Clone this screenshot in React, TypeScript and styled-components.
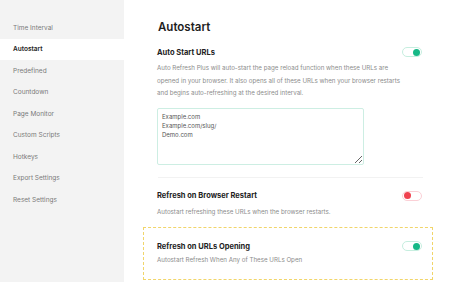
import React, { FC } from 'react';
import styled, { createGlobalStyle } from 'styled-components';

const GlobalStyle = createGlobalStyle`
  html, body {
    margin: 0;
    padding: 0;
    background: #ffffff;
  }
  body {
    font-family: Inter, "Noto Sans", sans-serif;
    color: #222222;
  }
`;

const MENU_ITEMS = [
  'Time Interval',
  'Autostart',
  'Predefined',
  'Countdown',
  'Page Monitor',
  'Custom Scripts',
  'Hotkeys',
  'Export Settings',
  'Reset Settings',
];

type ToggleProps = { $on?: boolean };

const Toggle: FC<ToggleProps> = ({ $on }) => (
  <Track $on={$on}>
    <Knob $on={$on} />
  </Track>
);

const App: FC = () => {
  return (
    <>
      <GlobalStyle />
      <Page>
        <Sidebar>
          {MENU_ITEMS.map((item) => (
            <MenuItem key={item} $active={item === 'Autostart'}>
              {item}
            </MenuItem>
          ))}
        </Sidebar>

        <Main>
          <Title>Autostart</Title>

          <Section>
            <SettingRow>
              <SettingName>Auto Start URLs</SettingName>
              <Toggle $on />
            </SettingRow>
            <Description>
              Auto Refresh Plus will auto-start the page reload function when these URLs are
              opened in your browser. It also opens all of these URLs when your browser restarts
              and begins auto-refreshing at the desired interval.
            </Description>
            <UrlBox
              defaultValue={'Example.com\nExample.com/slug/\nDemo.com'}
              spellCheck={false}
            />
          </Section>

          <Divider />

          <Section>
            <SettingRow>
              <SettingName>Refresh on Browser Restart</SettingName>
              <Toggle />
            </SettingRow>
            <Description>Autostart refreshing these URLs when the browser restarts.</Description>
          </Section>

          <Section $highlighted>
            <SettingRow>
              <SettingName>Refresh on URLs Opening</SettingName>
              <Toggle $on />
            </SettingRow>
            <Description $compact>Autostart Refresh When Any of These URLs Open</Description>
          </Section>
        </Main>
      </Page>
    </>
  );
};

export default App;

const Page = styled.div`
  display: flex;
  align-items: flex-start;
  width: 474px;
  height: 285px;
  overflow: hidden;
`;

const Sidebar = styled.nav`
  display: flex;
  flex-direction: column;
  flex: 0 0 124px;
  height: 282px;
  padding-top: 17px;
  box-sizing: border-box;
  background: #f3f3f3;
`;

const MenuItem = styled.div<{ $active?: boolean }>`
  display: flex;
  align-items: center;
  height: 21.5px;
  padding-left: 13px;
  font-size: 6.5px;
  font-weight: ${({ $active }) => ($active ? 600 : 400)};
  color: ${({ $active }) => ($active ? '#222222' : '#7a7a7a')};
  background: ${({ $active }) => ($active ? '#ffffff' : 'transparent')};
`;

const Main = styled.main`
  display: flex;
  flex-direction: column;
  width: 290px;
  margin-left: 19px;
  padding-top: 18px;
`;

const Title = styled.h1`
  margin: 0 0 9px 15px;
  font-size: 11.5px;
  line-height: 18px;
  font-weight: 600;
  color: #1e1e1e;
`;

const Section = styled.section<{ $highlighted?: boolean }>`
  box-sizing: border-box;
  padding: ${({ $highlighted }) => ($highlighted ? '11px 10px 12px 13px' : '0 11px 0 14px')};
  border: ${({ $highlighted }) => ($highlighted ? '1px dashed #f1d56a' : 'none')};
  margin-top: ${({ $highlighted }) => ($highlighted ? '9px' : '0')};
`;

const SettingRow = styled.div`
  display: flex;
  align-items: center;
  justify-content: space-between;
  height: 14px;
`;

const SettingName = styled.h3`
  margin: 0;
  font-size: 7.5px;
  font-weight: 700;
  color: #222222;
`;

const Description = styled.p<{ $compact?: boolean }>`
  margin: ${({ $compact }) => ($compact ? '1px 0 0' : '3px 0 0')};
  max-width: 252px;
  font-size: 6.2px;
  line-height: 12.5px;
  color: #8c8c8c;
`;

const UrlBox = styled.textarea`
  display: block;
  box-sizing: border-box;
  width: 207px;
  height: 57px;
  margin-top: 8px;
  padding: 3px 4px;
  border: 1px solid #cdeee3;
  border-radius: 2px;
  font-family: inherit;
  font-size: 6px;
  line-height: 9px;
  color: #555555;
  background: #ffffff;
  outline: none;
  resize: vertical;
`;

const Divider = styled.hr`
  margin: 12px 0 11px 15px;
  width: 265px;
  height: 1px;
  border: none;
  background: #f2f2f2;
`;

const Track = styled.div<{ $on?: boolean }>`
  display: flex;
  align-items: center;
  justify-content: ${({ $on }) => ($on ? 'flex-end' : 'flex-start')};
  box-sizing: border-box;
  width: 20px;
  height: 10px;
  padding: 0 1px;
  border: 1px solid ${({ $on }) => ($on ? '#c6eedf' : '#fbd0d6')};
  border-radius: 5px;
  background: #ffffff;
`;

const Knob = styled.span<{ $on?: boolean }>`
  width: 7px;
  height: 7px;
  border-radius: 50%;
  background: ${({ $on }) => ($on ? '#16b886' : '#f0424f')};
`;
